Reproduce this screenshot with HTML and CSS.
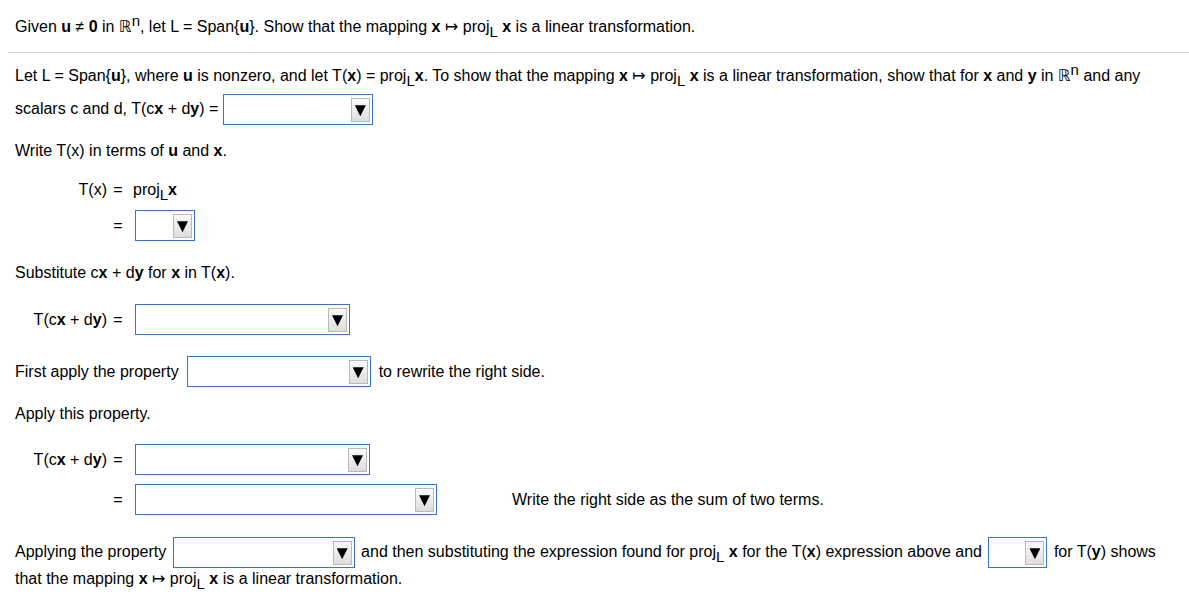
FILE: index.html
```html
<!DOCTYPE html>
<html lang="en">
<head>
  <meta charset="UTF-8">
  <title>Projection is a linear transformation</title>
  <link rel="stylesheet" href="styles.css">
</head>
<body>

<div class="title">Given <b>u</b> &ne; <b>0</b> in &#8477;<sup>n</sup>, let L = Span{<b>u</b>}. Show that the mapping <b>x</b> &#8614; proj<sub>L</sub> <b>x</b> is a linear transformation.</div>
<hr class="rule">

<div class="content">
  <p class="intro">Let L = Span{<b>u</b>}, where <b>u</b> is nonzero, and let T(<b>x</b>) = proj<sub>L</sub><b>x</b>. To show that the mapping <b>x</b> &#8614; proj<sub>L</sub> <b>x</b> is a linear transformation, show that for <b>x</b> and <b>y</b> in &#8477;<sup>n</sup> and any scalars c and d, T(c<b>x</b> + d<b>y</b>) = <span class="dd w150"><span class="dd-btn"></span></span></p>

  <p class="step s-write">Write T(x) in terms of <b>u</b> and <b>x</b>.</p>

  <div class="eqs eqs-1">
    <div class="eq">
      <span class="lhs">T(x)</span><span class="sign">=</span><span class="rhs">proj<sub>L</sub><b>x</b></span>
    </div>
    <div class="eq">
      <span class="lhs"></span><span class="sign">=</span><span class="dd w60"><span class="dd-btn"></span></span>
    </div>
  </div>

  <p class="step s-sub">Substitute c<b>x</b> + d<b>y</b> for <b>x</b> in T(<b>x</b>).</p>

  <div class="eqs eqs-2">
    <div class="eq">
      <span class="lhs">T(c<b>x</b> + d<b>y</b>)</span><span class="sign">=</span><span class="dd w215"><span class="dd-btn"></span></span>
    </div>
  </div>

  <div class="line s-first">
    <span>First apply the property</span>
    <span class="dd w184"><span class="dd-btn"></span></span>
    <span>to rewrite the right side.</span>
  </div>

  <p class="step s-apply">Apply this property.</p>

  <div class="eqs eqs-3">
    <div class="eq">
      <span class="lhs">T(c<b>x</b> + d<b>y</b>)</span><span class="sign">=</span><span class="dd w235"><span class="dd-btn"></span></span>
    </div>
    <div class="eq">
      <span class="lhs"></span><span class="sign">=</span><span class="dd w302"><span class="dd-btn"></span></span>
      <span class="hint">Write the right side as the sum of two terms.</span>
    </div>
  </div>

  <p class="outro">Applying the property <span class="dd w182"><span class="dd-btn"></span></span> and then substituting the expression found for proj<sub>L</sub> <b>x</b> for the T(<b>x</b>) expression above and <span class="dd w59"><span class="dd-btn"></span></span> for T(<b>y</b>) shows that the mapping <b>x</b> &#8614; proj<sub>L</sub> <b>x</b> is a linear transformation.</p>
</div>

</body>
</html>
```

FILE: styles.css
```css
body {
  margin: 0;
  font-family: "Liberation Sans", Arial, "DejaVu Sans", sans-serif;
  font-size: 16px;
  line-height: 18px;
  color: #000;
  background: #fff;
}

b {
  font-weight: bold;
}

sup {
  font-size: 15px;
  line-height: 0;
  vertical-align: 6px;
}

sub {
  font-size: 15px;
  line-height: 0;
  vertical-align: -5px;
}

.title {
  padding: 18px 15px 16px;
}

.rule {
  margin: 0 0 0 8px;
  border: 0;
  border-top: 1px solid #cdd1e4;
  height: 0;
}

.content {
  padding: 0 15px;
}

p {
  margin: 0;
}

.intro {
  margin-top: 6px;
  line-height: 33px;
}

.step {
  margin-top: 17px;
}

.s-sub {
  margin-top: 23px;
}

.s-apply {
  margin-top: 18px;
}

/* equation rows */
.eqs {
  display: flex;
  flex-direction: column;
  gap: 5px;
}

.eqs-1 {
  margin-top: 14px;
}

.eqs-2 {
  margin-top: 22px;
}

.eqs-3 {
  margin-top: 21px;
  gap: 9px;
}

.eq {
  display: flex;
  align-items: center;
  height: 31px;
}

.lhs {
  width: 92px;
  text-align: right;
}

.sign {
  width: 22px;
  text-align: center;
}

.eq .rhs {
  margin-left: 4px;
}

.eq .dd {
  margin-left: 6px;
}

.hint {
  margin-left: 75px;
}

.line {
  display: flex;
  align-items: center;
  gap: 8px;
  height: 31px;
}

.s-first {
  margin-top: 21px;
}

.outro {
  margin-top: 22px;
  line-height: 22px;
}

.outro .dd {
  margin: 0 2px;
}

/* drop-down answer boxes */
.dd {
  display: inline-block;
  position: relative;
  box-sizing: border-box;
  height: 31px;
  border: 1px solid #3a73d6;
  background: #fff;
  vertical-align: middle;
}

.dd-btn {
  position: absolute;
  top: 3px;
  right: 2px;
  width: 19px;
  height: 24px;
  box-sizing: border-box;
  border: 1px solid #b9b9b9;
  background: linear-gradient(#fafafa, #dedede);
}

.dd-btn::after {
  content: '';
  position: absolute;
  left: 3px;
  top: 6px;
  width: 11px;
  height: 11px;
  background: #000;
  clip-path: polygon(0 0, 100% 0, 50% 100%);
}

.w59 { width: 59px; }
.w60 { width: 60px; }
.w150 { width: 150px; }
.w182 { width: 182px; }
.w184 { width: 184px; }
.w215 { width: 215px; }
.w235 { width: 235px; }
.w302 { width: 302px; }
```
